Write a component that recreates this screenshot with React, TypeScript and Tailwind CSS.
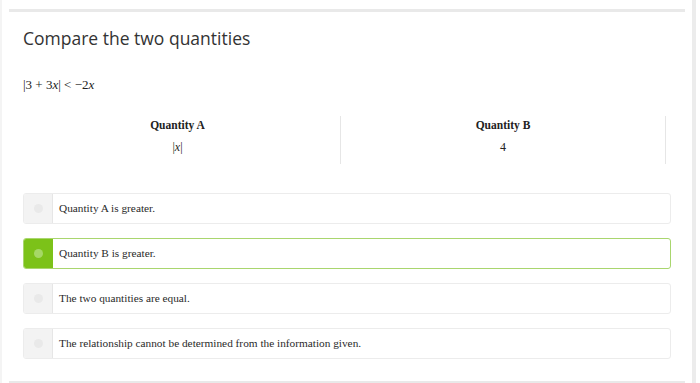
import React from "react";

const serif = { fontFamily: '"Liberation Serif", "Times New Roman", serif' };

function Option({ label, selected }: { label: string; selected?: boolean }) {
  return (
    <div
      className={
        "flex h-[31px] w-[648px] rounded-[3px] border " +
        (selected ? "border-[#a9d66e]" : "border-[#ececec]")
      }
    >
      <div
        className={
          "flex w-[29px] items-center justify-center rounded-l-[2px] " +
          (selected ? "bg-[#7cc219]" : "border-r border-[#e6e6e6] bg-[#f3f3f3]")
        }
      >
        <div
          className={
            "h-[9px] w-[9px] rounded-full " +
            (selected ? "bg-[#a6d866]" : "bg-[#e9e9e9]")
          }
        />
      </div>
      <div
        className="flex items-center pl-[6px] text-[11.3px] text-[#2a2a2a]"
        style={serif}
      >
        {label}
      </div>
    </div>
  );
}

export default function App() {
  return (
    <div className="flex h-[383px] w-[700px] overflow-hidden bg-white">
      <div className="w-[2px] bg-[#f4f4f4]" />
      <div className="ml-[7px] mt-[9px] flex w-[676px] flex-col border-b-[2px] border-t-[3px] border-[#e9e9e9]">
        <div
          className="ml-[14px] mt-[13px] text-[17.5px] leading-[26px] text-[#333]"
          style={{ fontFamily: '"Open Sans", sans-serif' }}
        >
          Compare the two quantities
        </div>
        <div
          className="ml-[14px] mt-[26px] text-[13px] leading-[16px] text-[#222]"
          style={serif}
        >
          |3 + 3<i>x</i>| &lt; −2<i>x</i>
        </div>
        <div className="ml-[6px] mt-[23px] flex">
          <div className="flex h-[48px] w-[326px] flex-col items-center border-r border-[#e6e6e6]">
            <div className="mt-[1px] text-[11.5px] font-bold leading-[16px] text-[#222]" style={serif}>
              Quantity A
            </div>
            <div className="mt-[6px] text-[12px] leading-[16px] text-[#222]" style={serif}>
              |<i>x</i>|
            </div>
          </div>
          <div className="flex h-[48px] w-[325px] flex-col items-center border-r border-[#e6e6e6]">
            <div className="mt-[1px] text-[11.5px] font-bold leading-[16px] text-[#222]" style={serif}>
              Quantity B
            </div>
            <div className="mt-[6px] text-[12px] leading-[16px] text-[#222]" style={serif}>
              4
            </div>
          </div>
        </div>
        <div className="ml-[14px] mt-[29px] flex flex-col gap-[14px]">
          <Option label="Quantity A is greater." />
          <Option label="Quantity B is greater." selected />
          <Option label="The two quantities are equal." />
          <Option label="The relationship cannot be determined from the information given." />
        </div>
      </div>
      <div className="ml-[7px] w-[4px] bg-[#ececec]" />
    </div>
  );
}
